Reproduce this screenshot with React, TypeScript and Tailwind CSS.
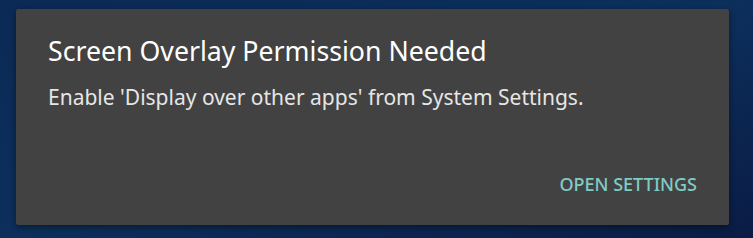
export default function App() {
  return (
    <div className="w-[753px] h-[238px] overflow-hidden bg-gradient-to-br from-[#0b2a55] via-[#0c2f5c] to-[#0a1c45] pt-[9px] pl-[16px] font-['Noto_Sans',sans-serif]">
      <div className="w-[713px] h-[216px] bg-[#424242] rounded-[2px] shadow-[0_2px_6px_rgba(0,0,0,0.45)] flex flex-col px-[32px]">
        <h1 className="mt-[24px] text-[26.7px] leading-[36px] text-white">
          Screen Overlay Permission Needed
        </h1>
        <p className="mt-[14px] text-[21px] leading-[28px] text-[#e6e6e6]">
          Enable 'Display over other apps' from System Settings.
        </p>
        <div className="mt-auto mb-[29px] flex justify-end">
          <button className="text-[18px] leading-[24px] font-medium uppercase text-[#80cbc4]">
            Open Settings
          </button>
        </div>
      </div>
    </div>
  );
}
